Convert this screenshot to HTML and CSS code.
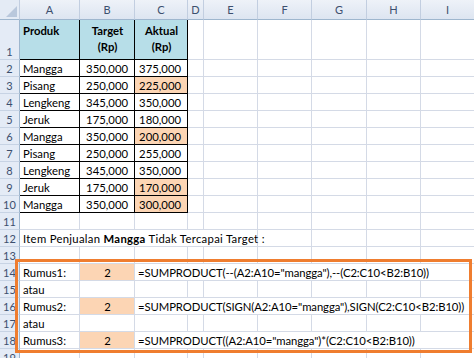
FILE: index.html
```html
<!DOCTYPE html>
<html>
<head>
<meta charset="utf-8">
<link rel="stylesheet" href="styles.css">
</head>
<body>
<div class="sheet">
  <div class="h corner"><span class="tri"></span></div>
  <div class="h">A</div><div class="h">B</div><div class="h">C</div><div class="h">D</div><div class="h">E</div><div class="h">F</div><div class="h">G</div><div class="h">H</div><div class="h">I</div>

  <div class="r r1">1</div>
  <div class="c t th thl">Produk</div>
  <div class="c t th thc">Target<br>(Rp)</div>
  <div class="c t th thc">Aktual<br>(Rp)</div>
  <div class="c"></div><div class="c"></div><div class="c"></div><div class="c"></div><div class="c"></div><div class="c"></div>

  <div class="r">2</div><div class="c t">Mangga</div><div class="c t n">350,000</div><div class="c t n">375,000</div>
  <div class="c"></div><div class="c"></div><div class="c"></div><div class="c"></div><div class="c"></div><div class="c"></div>

  <div class="r">3</div><div class="c t">Pisang</div><div class="c t n">250,000</div><div class="c t n o">225,000</div>
  <div class="c"></div><div class="c"></div><div class="c"></div><div class="c"></div><div class="c"></div><div class="c"></div>

  <div class="r">4</div><div class="c t">Lengkeng</div><div class="c t n">345,000</div><div class="c t n">350,000</div>
  <div class="c"></div><div class="c"></div><div class="c"></div><div class="c"></div><div class="c"></div><div class="c"></div>

  <div class="r">5</div><div class="c t">Jeruk</div><div class="c t n">175,000</div><div class="c t n">180,000</div>
  <div class="c"></div><div class="c"></div><div class="c"></div><div class="c"></div><div class="c"></div><div class="c"></div>

  <div class="r">6</div><div class="c t">Mangga</div><div class="c t n">350,000</div><div class="c t n o">200,000</div>
  <div class="c"></div><div class="c"></div><div class="c"></div><div class="c"></div><div class="c"></div><div class="c"></div>

  <div class="r">7</div><div class="c t">Pisang</div><div class="c t n">250,000</div><div class="c t n">255,000</div>
  <div class="c"></div><div class="c"></div><div class="c"></div><div class="c"></div><div class="c"></div><div class="c"></div>

  <div class="r">8</div><div class="c t">Lengkeng</div><div class="c t n">345,000</div><div class="c t n">350,000</div>
  <div class="c"></div><div class="c"></div><div class="c"></div><div class="c"></div><div class="c"></div><div class="c"></div>

  <div class="r">9</div><div class="c t">Jeruk</div><div class="c t n">175,000</div><div class="c t n o">170,000</div>
  <div class="c"></div><div class="c"></div><div class="c"></div><div class="c"></div><div class="c"></div><div class="c"></div>

  <div class="r">10</div><div class="c t">Mangga</div><div class="c t n">350,000</div><div class="c t n o">300,000</div>
  <div class="c"></div><div class="c"></div><div class="c"></div><div class="c"></div><div class="c"></div><div class="c"></div>

  <div class="r">11</div>
  <div class="c"></div><div class="c"></div><div class="c"></div><div class="c"></div><div class="c"></div><div class="c"></div><div class="c"></div><div class="c"></div><div class="c"></div>

  <div class="r">12</div>
  <div class="c span5 title">Item Penjualan&nbsp;<b>Mangga</b>&nbsp;Tidak Tercapai Target :</div>
  <div class="c"></div><div class="c"></div><div class="c"></div><div class="c"></div>

  <div class="r">13</div>
  <div class="c"></div><div class="c"></div><div class="c"></div><div class="c"></div><div class="c"></div><div class="c"></div><div class="c"></div><div class="c"></div><div class="c"></div>

  <div class="r">14</div>
  <div class="c">Rumus1:</div><div class="c o ctr">2</div>
  <div class="c span7 f">=SUMPRODUCT(--(A2:A10="mangga"),--(C2:C10&lt;B2:B10))</div>

  <div class="r">15</div>
  <div class="c">atau</div>
  <div class="c"></div><div class="c"></div><div class="c"></div><div class="c"></div><div class="c"></div><div class="c"></div><div class="c"></div><div class="c"></div>

  <div class="r">16</div>
  <div class="c">Rumus2:</div><div class="c o ctr">2</div>
  <div class="c span7 f">=SUMPRODUCT(SIGN(A2:A10="mangga"),SIGN(C2:C10&lt;B2:B10))</div>

  <div class="r">17</div>
  <div class="c">atau</div>
  <div class="c"></div><div class="c"></div><div class="c"></div><div class="c"></div><div class="c"></div><div class="c"></div><div class="c"></div><div class="c"></div>

  <div class="r">18</div>
  <div class="c">Rumus3:</div><div class="c o ctr">2</div>
  <div class="c span7 f">=SUMPRODUCT((A2:A10="mangga")*(C2:C10&lt;B2:B10))</div>

  <div class="r">19</div>
  <div class="c"></div><div class="c"></div><div class="c"></div><div class="c"></div><div class="c"></div><div class="c"></div><div class="c"></div><div class="c"></div><div class="c"></div>

  <div class="hl"></div>
</div>
</body>
</html>
```

FILE: styles.css
```css
html, body {
  margin: 0;
  padding: 0;
  background: #ffffff;
}
body {
  width: 474px;
  height: 358px;
  overflow: hidden;
  font-family: Lato, "Open Sans", sans-serif;
  font-size: 11.3px;
  color: #000;
}
.sheet {
  position: relative;
  display: grid;
  grid-template-columns: 20px 60px 55px 53px 16px 54px 54px 55px 54px 54px;
  grid-template-rows: 20px 40px repeat(18, 17px);
}
.sheet > div {
  box-sizing: border-box;
  white-space: nowrap;
}
.c {
  border-right: 1px solid #d4dae6;
  border-bottom: 1px solid #d4dae6;
  padding: 0 2px 0 3px;
  display: flex;
  align-items: flex-end;
  line-height: 15px;
  overflow: visible;
}
.title {
  letter-spacing: 0.3px;
}
.f {
  letter-spacing: -0.08px;
}
.h {
  background: linear-gradient(#eef2f8, #dde5f1);
  border-right: 1px solid #c2cee0;
  border-bottom: 1px solid #9eb6ce;
  color: #3c4f6e;
  display: flex;
  align-items: center;
  justify-content: center;
  font-size: 11px;
}
.corner {
  position: relative;
  background: #e4ebf5;
}
.tri {
  position: absolute;
  right: 2px;
  bottom: 2px;
  width: 0;
  height: 0;
  border-left: 11px solid transparent;
  border-bottom: 11px solid #b9c8dc;
}
.r {
  background: #e4ebf6;
  border-right: 1px solid #9eb6ce;
  border-bottom: 1px solid #c7d3e4;
  color: #3c4f6e;
  display: flex;
  align-items: flex-end;
  justify-content: center;
  line-height: 15px;
  font-size: 11px;
}
.t {
  border-right-color: #000;
  border-bottom-color: #000;
}
.th {
  background: #b7dee8;
  font-weight: bold;
  line-height: 16px;
  padding-top: 3px;
}
.thl {
  align-items: flex-start;
}
.thc {
  display: block;
  text-align: center;
}
.n {
  justify-content: flex-end;
  padding-right: 6px;
}
.o {
  background: #fcd5b4;
}
.ctr {
  justify-content: center;
}
.span5 {
  grid-column: span 5;
}
.span7 {
  grid-column: span 7;
}
.hl {
  position: absolute;
  left: 15px;
  top: 259px;
  width: 457px;
  height: 94px;
  border: 3px solid #ef7d2f;
}
```
